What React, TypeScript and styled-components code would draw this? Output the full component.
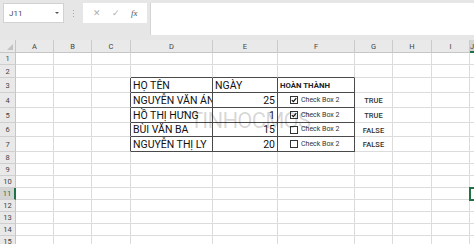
import React from 'react';
import styled, { createGlobalStyle, css } from 'styled-components';

const Global = createGlobalStyle`
  html, body { margin: 0; padding: 0; background: #ffffff; }
  body { font-family: Roboto, "Liberation Sans", sans-serif; }
  #root { width: 474px; height: 244px; overflow: hidden; }
`;

const GRID_LINE = '#dcdcdc';
const TABLE_LINE = '#4a4a4a';
const GREEN = '#217346';

const Window = styled.div`
  width: 474px;
  height: 244px;
  display: flex;
  flex-direction: column;
  overflow: hidden;
`;

const FormulaBar = styled.div`
  height: 40px;
  flex: none;
  background: #e6e6e6;
  display: flex;
  align-items: flex-start;
  padding: 3px 0 0 3px;
  box-sizing: border-box;
`;

const NameBox = styled.div`
  width: 61px;
  height: 20px;
  box-sizing: border-box;
  background: #fff;
  border: 1px solid #d2d2d2;
  display: flex;
  align-items: center;
  justify-content: space-between;
  padding: 0 4px 0 5px;
  font-size: 8px;
  color: #444;
`;

const Caret = styled.span`
  width: 0;
  height: 0;
  border-left: 2px solid transparent;
  border-right: 2px solid transparent;
  border-top: 2px solid #555;
`;

const Grip = styled.div`
  width: 19px;
  height: 20px;
  display: flex;
  flex-direction: column;
  align-items: center;
  justify-content: center;
  gap: 2px;
  span {
    width: 1px;
    height: 1px;
    background: #a8a8a8;
  }
`;

const FxButtons = styled.div`
  width: 64px;
  height: 20px;
  box-sizing: border-box;
  background: #fff;
  display: flex;
  align-items: center;
  justify-content: space-around;
  padding: 0 4px;
  color: #b0b0b0;
  font-size: 9px;
`;

const FxLabel = styled.span`
  font-family: "Liberation Serif", serif;
  font-style: italic;
  font-size: 9px;
  color: #555;
`;

const FormulaInput = styled.div`
  flex: 1;
  margin-left: 3px;
  height: 32px;
  background: #fff;
  border-left: 1px solid #d4d4d4;
`;

const Sheet = styled.div`
  position: relative;
  flex: 1;
`;

const Grid = styled.div`
  display: grid;
  grid-template-columns: 16px 38px 38px 39px 82px 65px 77px 38px 39px 38px 1fr;
  grid-template-rows: 13px 12px 13px 15px 15px 15px 14px 15px repeat(8, 12px);
`;

const Corner = styled.div`
  background: #e9e9e9;
  border-right: 1px solid #c6c6c6;
  border-bottom: 1px solid #c6c6c6;
  position: relative;
  &::after {
    content: '';
    position: absolute;
    right: 2px;
    bottom: 2px;
    width: 0;
    height: 0;
    border-left: 6px solid transparent;
    border-bottom: 6px solid #c2c2c2;
  }
`;

const ColHeader = styled.div<{ $active?: boolean }>`
  background: ${(p) => (p.$active ? '#d3d3d3' : '#e9e9e9')};
  border-right: 1px solid #cbcbcb;
  border-bottom: 1px solid ${(p) => (p.$active ? GREEN : '#c6c6c6')};
  ${(p) => p.$active && css`border-bottom-width: 2px;`}
  box-sizing: border-box;
  display: flex;
  align-items: center;
  justify-content: center;
  font-size: 7.5px;
  color: #444;
  padding-top: 1px;
`;

const RowHeader = styled.div<{ $active?: boolean }>`
  background: ${(p) => (p.$active ? '#d3d3d3' : '#e9e9e9')};
  border-right: ${(p) => (p.$active ? `2px solid ${GREEN}` : '1px solid #c6c6c6')};
  border-bottom: 1px solid #cfcfcf;
  box-sizing: border-box;
  display: flex;
  align-items: center;
  justify-content: center;
  font-size: 7.5px;
  color: ${(p) => (p.$active ? GREEN : '#444')};
`;

const Cell = styled.div<{ $r?: boolean; $b?: boolean; $align?: 'left' | 'right' | 'center' }>`
  box-sizing: border-box;
  border-right: 1px solid ${(p) => (p.$r ? TABLE_LINE : GRID_LINE)};
  border-bottom: 1px solid ${(p) => (p.$b ? TABLE_LINE : GRID_LINE)};
  overflow: hidden;
  white-space: nowrap;
  display: flex;
  align-items: flex-end;
  justify-content: ${(p) => (p.$align === 'right' ? 'flex-end' : p.$align === 'center' ? 'center' : 'flex-start')};
  padding: 0 2px;
  font-size: 10.5px;
  line-height: 12px;
  color: #111;
`;

const SmallBold = styled.span`
  font-size: 7.8px;
  font-weight: 700;
  line-height: 10px;
  color: #222;
  padding-bottom: 1px;
`;

const BoolText = styled.span`
  font-size: 7.5px;
  font-weight: 500;
  color: #333;
  line-height: 10px;
  align-self: center;
  padding-top: 2px;
`;

const CheckWrap = styled.div`
  display: flex;
  align-items: center;
  gap: 3px;
  align-self: center;
  margin-left: 10px;
  font-size: 7px;
  color: #333;
  line-height: 9px;
`;

const Box = styled.span`
  width: 8px;
  height: 8px;
  box-sizing: border-box;
  border: 1px solid #333;
  background: #fff;
  display: flex;
  align-items: center;
  justify-content: center;
`;

const Selection = styled.div`
  position: absolute;
  left: 469px;
  top: 147px;
  width: 12px;
  height: 14px;
  box-sizing: border-box;
  border: 2px solid ${GREEN};
`;

const Watermark = styled.div`
  position: absolute;
  left: 190px;
  top: 68px;
  font-size: 22px;
  letter-spacing: -0.8px;
  color: rgba(0, 0, 0, 0.17);
  pointer-events: none;
`;

const CheckBox: React.FC<{ checked: boolean }> = ({ checked }) => (
  <CheckWrap>
    <Box>
      {checked && (
        <svg width="6" height="6" viewBox="0 0 6 6">
          <path d="M0.8 3.1 L2.4 4.7 L5.3 1.2" stroke="#111" strokeWidth="1.2" fill="none" />
        </svg>
      )}
    </Box>
    <span>Check Box 2</span>
  </CheckWrap>
);

const COLS = ['A', 'B', 'C', 'D', 'E', 'F', 'G', 'H', 'I', 'J'];

type Row = { name: string; days: string; checked: boolean; result: string };
const DATA: Row[] = [
  { name: 'NGUYỄN VĂN ÁNH', days: '25', checked: true, result: 'TRUE' },
  { name: 'HỒ THỊ HƯNG', days: '1', checked: true, result: 'TRUE' },
  { name: 'BÙI VĂN BA', days: '15', checked: false, result: 'FALSE' },
  { name: 'NGUYỄN THỊ LY', days: '20', checked: false, result: 'FALSE' },
];

export default function App() {
  const rows: React.ReactNode[] = [];
  for (let r = 1; r <= 15; r++) {
    rows.push(
      <RowHeader key={`h${r}`} $active={r === 11}>
        {r}
      </RowHeader>
    );
    for (let c = 0; c < 10; c++) {
      const rightDark = r >= 3 && r <= 7 && c >= 2 && c <= 5;
      const bottomDark = r >= 2 && r <= 7 && c >= 3 && c <= 5;
      let content: React.ReactNode = null;
      let align: 'left' | 'right' | 'center' = 'left';
      if (r === 3) {
        if (c === 3) content = 'HỌ TÊN';
        if (c === 4) content = 'NGÀY';
        if (c === 5) content = <SmallBold>HOÀN THÀNH</SmallBold>;
      } else if (r >= 4 && r <= 7) {
        const d = DATA[r - 4];
        if (c === 3) content = d.name;
        if (c === 4) {
          content = d.days;
          align = 'right';
        }
        if (c === 5) content = <CheckBox checked={d.checked} />;
        if (c === 6) {
          content = <BoolText>{d.result}</BoolText>;
          align = 'center';
        }
      }
      rows.push(
        <Cell key={`c${r}-${c}`} $r={rightDark} $b={bottomDark} $align={align}>
          {content}
        </Cell>
      );
    }
  }

  return (
    <Window>
      <Global />
      <FormulaBar>
        <NameBox>
          <span>J11</span>
          <Caret />
        </NameBox>
        <Grip>
          <span />
          <span />
          <span />
        </Grip>
        <FxButtons>
          <span>✕</span>
          <span>✓</span>
          <FxLabel>fx</FxLabel>
        </FxButtons>
        <FormulaInput />
      </FormulaBar>
      <Sheet>
        <Grid>
          <Corner />
          {COLS.map((c) => (
            <ColHeader key={c} $active={c === 'J'}>
              {c}
            </ColHeader>
          ))}
          {rows}
        </Grid>
        <Watermark>TINHOCMOS</Watermark>
        <Selection />
      </Sheet>
    </Window>
  );
}
